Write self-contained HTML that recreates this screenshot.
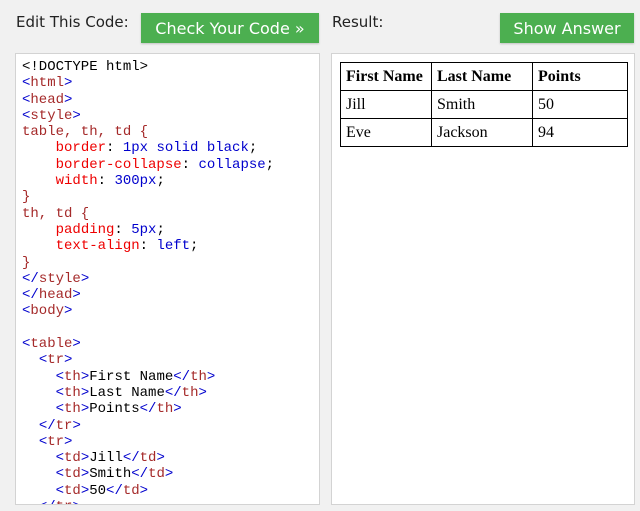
<!DOCTYPE html>
<html><head><style>
body{margin:0;background:#f1f1f1;width:640px;height:511px;overflow:hidden;position:relative;font-family:"DejaVu Sans","Liberation Sans",sans-serif}
.lbl{position:absolute;font-size:15px;color:#222;top:13px}
.btn{position:absolute;top:13px;height:30px;background:#4caf50;color:#fff;font-size:16px;line-height:32px;text-align:center;box-shadow:0 1px 2px rgba(0,0,0,.2)}
.box{position:absolute;top:53px;height:450px;background:#fff;border:1px solid #d3d3d3;overflow:hidden}
pre{margin:0;position:absolute;left:6px;top:5px;font-family:"Liberation Mono",monospace;font-size:14px;line-height:16.3px;color:#000}
.b{color:#0000cd}.r{color:#a52a2a}.p{color:#e00}
table{position:absolute;left:8px;top:8px;border-collapse:collapse;width:288px;font-family:"Liberation Serif",serif;font-size:16px}
th,td{border:1px solid #000;padding:5px;text-align:left;height:17px;line-height:17px}
</style></head><body>
<div class="lbl" style="left:16px">Edit This Code:</div>
<div class="btn" style="left:141px;width:178px">Check Your Code »</div>
<div class="lbl" style="left:332px">Result:</div>
<div class="btn" style="left:500px;width:134px">Show Answer</div>
<div class="box" style="left:15px;width:303px"><pre>&lt;!DOCTYPE html&gt;
<span class="b">&lt;</span><span class="r">html</span><span class="b">&gt;</span>
<span class="b">&lt;</span><span class="r">head</span><span class="b">&gt;</span>
<span class="b">&lt;</span><span class="r">style</span><span class="b">&gt;</span>
<span class="r">table, th, td {</span>
    <span class="p">border</span>: <span class="b">1px solid black</span>;
    <span class="p">border-collapse</span>: <span class="b">collapse</span>;
    <span class="p">width</span>: <span class="b">300px</span>;
<span class="r">}</span>
<span class="r">th, td {</span>
    <span class="p">padding</span>: <span class="b">5px</span>;
    <span class="p">text-align</span>: <span class="b">left</span>;
<span class="r">}</span>
<span class="b">&lt;/</span><span class="r">style</span><span class="b">&gt;</span>
<span class="b">&lt;/</span><span class="r">head</span><span class="b">&gt;</span>
<span class="b">&lt;</span><span class="r">body</span><span class="b">&gt;</span>

<span class="b">&lt;</span><span class="r">table</span><span class="b">&gt;</span>
  <span class="b">&lt;</span><span class="r">tr</span><span class="b">&gt;</span>
    <span class="b">&lt;</span><span class="r">th</span><span class="b">&gt;</span>First Name<span class="b">&lt;/</span><span class="r">th</span><span class="b">&gt;</span>
    <span class="b">&lt;</span><span class="r">th</span><span class="b">&gt;</span>Last Name<span class="b">&lt;/</span><span class="r">th</span><span class="b">&gt;</span>
    <span class="b">&lt;</span><span class="r">th</span><span class="b">&gt;</span>Points<span class="b">&lt;/</span><span class="r">th</span><span class="b">&gt;</span>
  <span class="b">&lt;/</span><span class="r">tr</span><span class="b">&gt;</span>
  <span class="b">&lt;</span><span class="r">tr</span><span class="b">&gt;</span>
    <span class="b">&lt;</span><span class="r">td</span><span class="b">&gt;</span>Jill<span class="b">&lt;/</span><span class="r">td</span><span class="b">&gt;</span>
    <span class="b">&lt;</span><span class="r">td</span><span class="b">&gt;</span>Smith<span class="b">&lt;/</span><span class="r">td</span><span class="b">&gt;</span>
    <span class="b">&lt;</span><span class="r">td</span><span class="b">&gt;</span>50<span class="b">&lt;/</span><span class="r">td</span><span class="b">&gt;</span>
  <span class="b">&lt;/</span><span class="r">tr</span><span class="b">&gt;</span>
</pre></div>
<div class="box" style="left:331px;width:302px">
<table>
<tr><th style="width:80px">First Name</th><th style="width:90px">Last Name</th><th>Points</th></tr>
<tr><td>Jill</td><td>Smith</td><td>50</td></tr>
<tr><td>Eve</td><td>Jackson</td><td>94</td></tr>
</table></div>
</body></html>
